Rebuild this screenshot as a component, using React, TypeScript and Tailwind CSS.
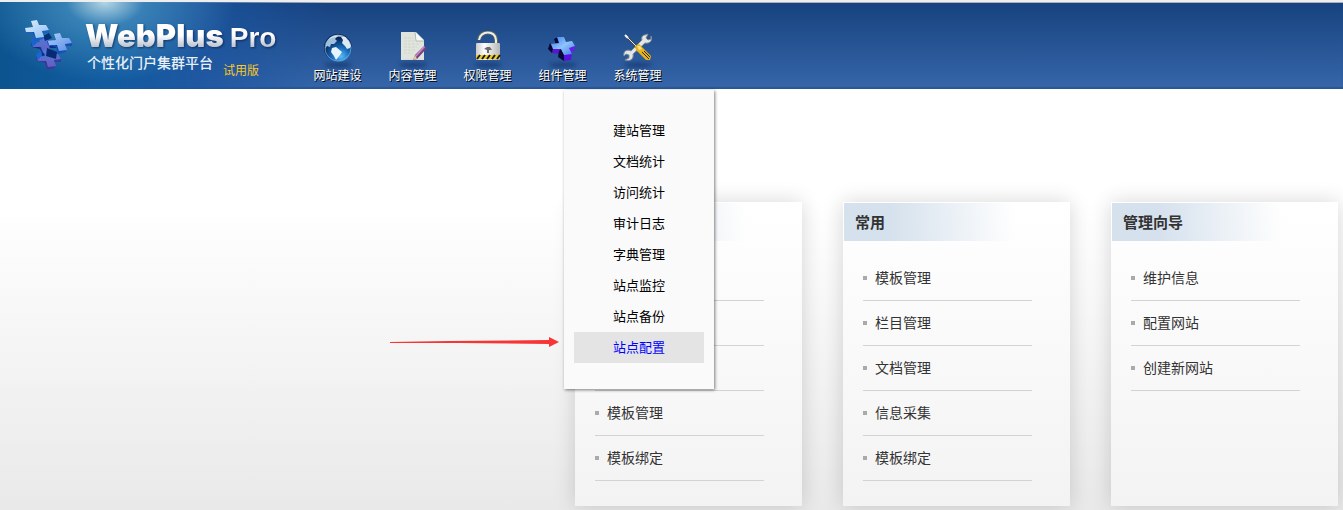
import type { ReactNode } from 'react'

type NavItem = {
    label: string
    icon: ReactNode
    children?: string[]
}

type Panel = {
    title: string
    links: string[]
}

function Cube({ x, y, top, left, right }: { x: number; y: number; top: string; left: string; right: string }) {
    return (
        <g transform={`translate(${x} ${y})`}>
            <path d="M0 8 L1 12 L9 14 L11 21 L19 19 L18 13 L25 13 L25 9 L17 8 L11 8 Z" fill={left} />
            <path d="M8 11 L18 8 L19 13 L11 16 Z" fill={right} />
            <path d="M7 1 L13 0 L15 5 L22 5 L25 10 L18 11 L20 17 L12 18 L10 12 L2 12 L1 8 L9 7 Z" fill={top} />
        </g>
    )
}

function LogoMark() {
    return (
        <svg className="h-[52px] w-[50px] shrink-0" viewBox="0 0 50 52" aria-hidden="true">
            <defs>
                <linearGradient id="plusA" x1="0" y1="0" x2="1" y2="1">
                    <stop offset="0" stopColor="#dceffd" />
                    <stop offset="1" stopColor="#8fbef2" />
                </linearGradient>
                <linearGradient id="plusB" x1="0" y1="0" x2="1" y2="1">
                    <stop offset="0" stopColor="#a9d0fa" />
                    <stop offset="1" stopColor="#5c8be6" />
                </linearGradient>
                <linearGradient id="plusC" x1="0" y1="0" x2="0" y2="1">
                    <stop offset="0" stopColor="#4a7fdc" />
                    <stop offset="1" stopColor="#6a5cc0" />
                </linearGradient>
            </defs>
            <Cube x={8} y={17} top="url(#plusC)" left="#0b2f86" right="#1746a8" />
            <path d="M8 22 L14 16 L14 25 L9 29 Z" fill="#1b62cf" />
            <path d="M20 18 L26 15 L29 20 L22 23 Z" fill="#06307c" />
            <Cube x={13} y={31} top="url(#plusC)" left="#3a3a9c" right="#2a2f8e" />
            <path d="M13 37 L18 32 L19 37 L15 42 Z" fill="#1a66d4" />
            <path d="M24 30 L34 34 L33 41 L23 38 Z" fill="#082a74" />
            <Cube x={24} y={15} top="url(#plusB)" left="#1450b8" right="#0d3c98" />
            <Cube x={1} y={2} top="url(#plusA)" left="#1a5fc4" right="#0f47a0" />
        </svg>
    )
}

function GlobeIcon() {
    return (
        <svg className="size-8" viewBox="0 0 32 32" aria-hidden="true">
            <defs>
                <radialGradient id="sea" cx="0.6" cy="0.8" r="0.8">
                    <stop offset="0" stopColor="#58bdf8" />
                    <stop offset="0.4" stopColor="#1769b8" />
                    <stop offset="0.85" stopColor="#062250" />
                </radialGradient>
            </defs>
            <circle cx="16" cy="17" r="14" fill="url(#sea)" />
            <circle cx="16" cy="17" r="13" fill="none" stroke="#8fbfe6" strokeWidth="1" opacity="0.6" />
            <path d="M4 12 C7 6 12 4 16 5 L13 8 L15 10 L12 13 L9 13 L8 16 L5 15 L3 18 Z" fill="#9fc0dc" />
            <path d="M10 17 L14 16 L20 21 L18 24 L14 29 L12 25 L9 21 Z" fill="#e9f3fb" />
            <path d="M19 6 L23 6 L27 10 L29 15 L28 17 L25 18 L23 15 L20 12 L21 9 Z" fill="#dbe9f5" />
            <path d="M6 9 C10 3 20 2 26 8 C20 5 12 5 6 9 Z" fill="#ffffff" opacity="0.6" />
        </svg>
    )
}

function DocumentIcon() {
    return (
        <svg className="size-8" viewBox="0 0 32 32" aria-hidden="true">
            <path d="M4 1 H19 L27 9 V29 H4 Z" fill="#dfe4dd" />
            <path d="M18 1 L19 10 H27 Z" fill="#f8faf7" />
            <path d="M18 1 L19 10 H27" fill="none" stroke="#b4bab4" strokeWidth="1" />
            <path d="M7 7 H16 M7 10 H17 M7 13 H23 M7 16 H20 M7 19 H18 M7 22 H16" stroke="#d0d6cf" strokeWidth="1" strokeDasharray="3 1" />
            <path d="M16 29 L18 24 L27 15 L30 17 L20 28 Z" fill="#7c3f83" />
            <path d="M18 25 L27 15 L28 16 L19 26 Z" fill="#c691ca" />
            <path d="M16 29 L18 24 L20 28 Z" fill="#e7c9a0" />
        </svg>
    )
}

function LockIcon() {
    return (
        <svg className="size-8" viewBox="0 0 32 32" aria-hidden="true">
            <defs>
                <linearGradient id="steel" x1="0" y1="0" x2="1" y2="0">
                    <stop offset="0" stopColor="#c9c9c9" />
                    <stop offset="0.35" stopColor="#ffffff" />
                    <stop offset="1" stopColor="#b5b5b5" />
                </linearGradient>
            </defs>
            <path d="M7 9 C8 -1 24 -1 24 9 V14" fill="none" stroke="#5d6a60" strokeWidth="4" />
            <path d="M7 9 C8 -1 24 -1 24 9 V14" fill="none" stroke="#eceee8" strokeWidth="2" />
            <rect x="4" y="12" width="24" height="17" rx="1" fill="url(#steel)" />
            <path d="M12 18 L15 16 L18 16 L20 19 L17 19 L17 22 L15 22 L15 19 Z" fill="#6b6b6b" />
            <rect x="4" y="24" width="24" height="4" fill="#f3cf1d" />
            <path d="M5 28 L8 24 M10 28 L13 24 M15 28 L18 24 M20 28 L23 24 M25 28 L28 24" stroke="#1d1a10" strokeWidth="2" />
        </svg>
    )
}

function PlusIcon() {
    return (
        <svg className="size-8" viewBox="0 0 32 32" aria-hidden="true">
            <defs>
                <linearGradient id="plusTop" x1="0" y1="0" x2="1" y2="1">
                    <stop offset="0" stopColor="#3b78ee" />
                    <stop offset="0.5" stopColor="#8fc4fb" />
                    <stop offset="1" stopColor="#3f78e8" />
                </linearGradient>
            </defs>
            <path d="M7 8 L11 6 L14 12 L9 14 Z" fill="#050a3a" />
            <path d="M3 13 L6 17 L14 18 L14 23 L5 22 L2 18 Z" fill="#5a14d8" />
            <path d="M3 12 L6 17 L5 22 L1 18 Z" fill="#07072e" />
            <path d="M16 22 L25 21 L24 29 L16 30 Z" fill="#5b10e0" />
            <path d="M14 18 L17 23 L17 30 L11 26 L12 20 Z" fill="#08083c" />
            <path d="M21 16 L28 15 L27 20 L23 21 Z" fill="#6a1cf0" />
            <path d="M10 6 L17 6 L19 11 L25 10 L28 15 L22 17 L25 23 L17 24 L14 18 L6 18 L4 13 L12 12 Z" fill="url(#plusTop)" />
        </svg>
    )
}

function ToolsIcon() {
    return (
        <svg className="size-8" viewBox="0 0 32 32" aria-hidden="true">
            <path d="M23 4 L26 3 L24 7 L26 9 L29 8 L29 5 C31 9 28 13 23 12 L11 23 C12 28 8 31 3 29 L7 27 L7 24 L4 23 L2 25 C1 20 5 18 9 20 L20 9 C19 6 21 4 23 4 Z" fill="#e3e6e7" stroke="#858c92" strokeWidth="1" />
            <path d="M4 5 L15 16" stroke="#3f4d60" strokeWidth="3" />
            <path d="M4 5 L15 16" stroke="#e8ecef" strokeWidth="1" />
            <path d="M3 4 L6 7" stroke="#f4f6f7" strokeWidth="2" />
            <path d="M13 15 L17 13 L29 25 L28 29 L24 29 L14 19 Z" fill="#e8b21d" />
            <path d="M15 15 L18 15 L20 18 L17 19 Z" fill="#fbe27a" />
            <path d="M20 21 L27 28 M22 20 L28 26" stroke="#33280c" strokeWidth="1" />
        </svg>
    )
}

const navItems: NavItem[] = [
    { label: '网站建设', icon: <GlobeIcon /> },
    { label: '内容管理', icon: <DocumentIcon /> },
    { label: '权限管理', icon: <LockIcon /> },
    { label: '组件管理', icon: <PlusIcon /> },
    {
        label: '系统管理',
        icon: <ToolsIcon />,
        children: ['建站管理', '文档统计', '访问统计', '审计日志', '字典管理', '站点监控', '站点备份', '站点配置'],
    },
]

const activeChild = '站点配置'

const panels: Panel[] = [
    { title: '', links: ['', '', '', '模板管理', '模板绑定'] },
    { title: '常用', links: ['模板管理', '栏目管理', '文档管理', '信息采集', '模板绑定'] },
    { title: '管理向导', links: ['维护信息', '配置网站', '创建新网站'] },
]

function Arrow() {
    return (
        <svg className="absolute top-1 right-full mr-[15px] h-3 w-[170px]" viewBox="0 0 170 12" aria-hidden="true">
            <path d="M1 6 L60 5 L160 4 L160 1 L170 6 L160 11 L160 8 L70 7 L1 7 Z" fill="#f73535" />
        </svg>
    )
}

function SubMenu({ items }: { items: string[] }) {
    return (
        <ul className="absolute top-full -left-9 z-10 mt-px w-[150px] bg-[#fafafa] px-[10px] pt-[25px] pb-[26px] text-[13px] text-black shadow-[1px_1px_3px_rgba(0,0,0,0.5)]">
            {items.map((item) => (
                <li key={item} className="relative">
                    {item === activeChild && <Arrow />}
                    <a
                        href="#"
                        className={
                            item === activeChild
                                ? 'block bg-[#e4e4e4] pb-px text-center leading-[30px] text-[#0000ff]'
                                : 'block pb-px text-center leading-[30px]'
                        }
                    >
                        {item}
                    </a>
                </li>
            ))}
        </ul>
    )
}

function Header() {
    return (
        <header className="border-t-2 border-[#eeeeee] bg-linear-to-b from-[#17427f] to-[#3666aa] shadow-[inset_0_1px_0_#b0b0b4,inset_0_-2px_1px_#2a5693]">
            <div className="flex h-[87px] bg-[radial-gradient(ellipse_130px_80px_at_105px_0px,#b4d6e4_0%,#58a4cc88_30%,#2a7fba00_100%),linear-gradient(to_right,#0c5490_0px,#115ba0_110px,#1a55a0cc_200px,#1a4f9500_330px)]">
                <div className="flex w-[300px] shrink-0 pt-4 pl-[23px]">
                    <LogoMark />
                    <div className="ml-3">
                        <div className="flex items-baseline gap-[6px] bg-linear-to-b from-white from-45% to-[#b4bcc8] to-80% bg-clip-text leading-9 whitespace-nowrap text-transparent drop-shadow-[1px_1px_1px_rgba(0,20,60,0.6)]">
                            <span className="font-[Inter] text-[31px] font-black">WebPlus</span>
                            <span className="font-['Liberation_Sans'] text-[28px] font-bold">Pro</span>
                        </div>
                        <div className="flex gap-[10px] pl-[2px] whitespace-nowrap">
                            <span className="text-sm leading-3 font-medium text-[#e8f0f8]">个性化门户集群平台</span>
                            <span className="pt-[6px] text-xs leading-4 text-[#fdc920]">试用版</span>
                        </div>
                    </div>
                </div>
                <nav>
                    <ul className="flex h-full">
                        {navItems.map((item) => (
                            <li key={item.label} className="relative w-[75px]">
                                <a href="#" className="flex flex-col items-center pt-[29px] text-xs leading-4 text-white [text-shadow:1px_1px_0_#000]">
                                    {item.icon}
                                    <span className="h-1 w-7 rounded-[50%] bg-[#173a72] blur-[2px]" />
                                    {item.label}
                                </a>
                                {item.children && <SubMenu items={item.children} />}
                            </li>
                        ))}
                    </ul>
                </nav>
            </div>
        </header>
    )
}

function PanelCard({ title, links }: Panel) {
    return (
        <section className="w-[227px] bg-linear-to-b from-white to-[#f4f3f4] pt-px pl-px shadow-[0_0_20px_rgba(0,0,0,0.16)]">
            <h2 className="h-[38px] bg-linear-to-r from-[#d5e1ed] from-20% to-transparent to-75% pl-[11px] text-[15px] leading-[37px] font-bold text-[#333333]">
                {title}
            </h2>
            <ul className="mt-[15px] mb-[25px] ml-[19px] w-[169px]">
                {links.map((link, i) => (
                    <li key={i} className="flex h-[45px] items-center gap-2 border-b border-[#d3d3d3]">
                        <span className="size-1 bg-[#aaaaaa]" />
                        <a href="#" className="pb-[2px] text-sm text-[#333333]">{link}</a>
                    </li>
                ))}
            </ul>
        </section>
    )
}

export default function App() {
    return (
        <div className="flex min-h-screen flex-col bg-linear-to-b from-white from-40% to-[#e9e9e9] font-['Noto_Sans_CJK_SC',sans-serif]">
            <Header />
            <main className="flex justify-end gap-[41px] pt-[113px] pr-[5px] pb-1">
                {panels.map((panel, i) => (
                    <PanelCard key={i} {...panel} />
                ))}
            </main>
        </div>
    )
}
